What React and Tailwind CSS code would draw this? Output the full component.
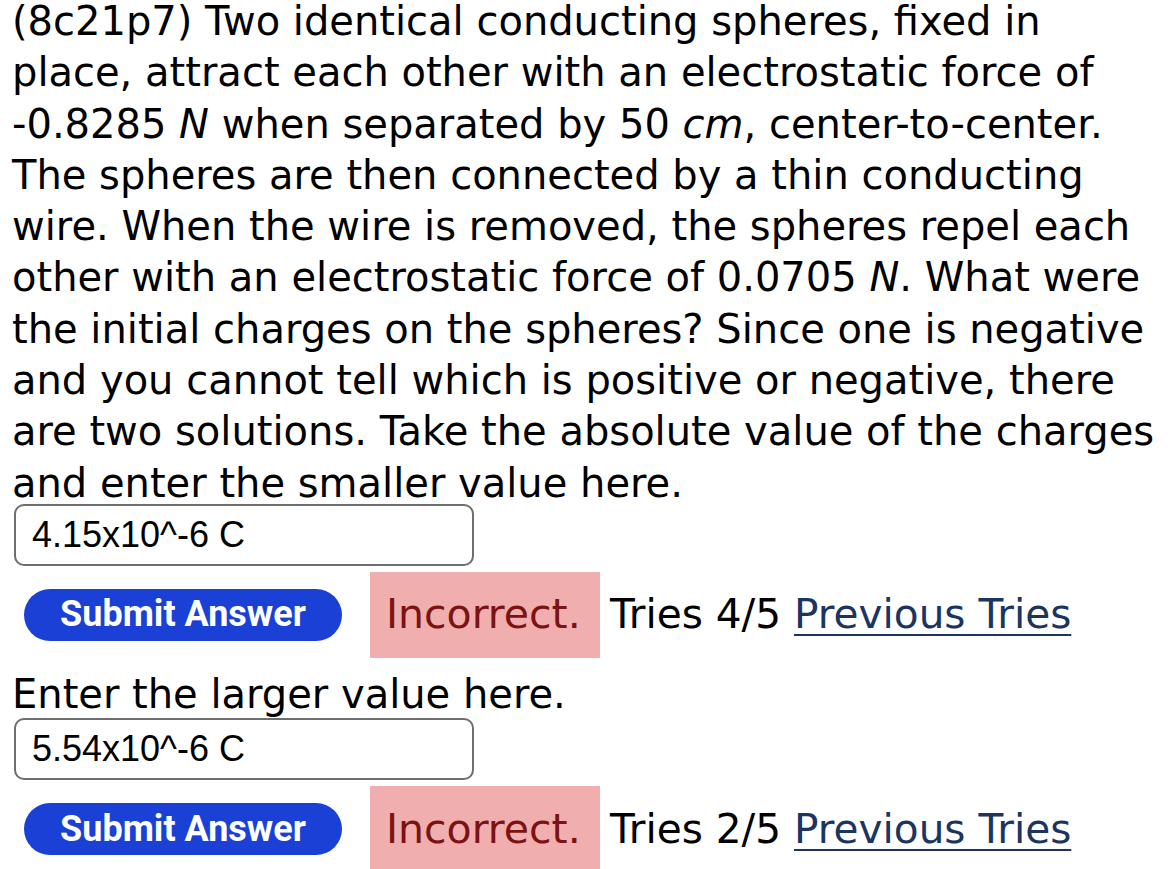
import React from 'react';

const AnswerRow = ({ value, tries, offset }) => (
  <div>
    <div className={`pl-[2px] ${offset}`}>
      <input
        type="text"
        defaultValue={value}
        className="w-[460px] h-[62px] rounded-[10px] border-2 border-[#6e6e6e] bg-white px-[16px] text-[36px] text-black font-['Liberation_Sans',Arial,sans-serif] outline-none"
      />
    </div>
    <div className="flex items-center pl-[12px] mt-[6px]">
      <button
        type="button"
        className="w-[318px] h-[52px] rounded-full bg-[#1a40d6] text-white text-[36px] font-bold font-['Roboto','Liberation_Sans',sans-serif]"
      >
        Submit Answer
      </button>
      <div className="ml-[28px] h-[86px] w-[230px] bg-[#f1aeae] flex items-center pl-[16px] text-[41px] text-[#7c1212]">
        Incorrect.
      </div>
      <div className="ml-[10px] text-[40.6px] text-black">
        Tries {tries}{' '}
        <a href="#" className="text-[#1b3562] underline decoration-2 underline-offset-[6px]">
          Previous Tries
        </a>
      </div>
    </div>
  </div>
);

export default function App() {
  return (
    <div className="min-h-screen bg-white font-['DejaVu_Sans',Verdana,sans-serif] text-black">
      <div className="pl-[12px] pr-[4px] text-[40px] leading-[51.3px]">
        <p className="-mt-[4px]">
          (8c21p7) Two identical conducting spheres, fixed in place, attract each other with an
          electrostatic force of -0.8285 <i>N</i> when separated by 50 <i>cm</i>, center-to-center.
          The spheres are then connected by a thin conducting wire. When the wire is removed, the
          spheres repel each other with an electrostatic force of 0.0705 <i>N</i>. What were the
          initial charges on the spheres? Since one is negative and you cannot tell which is
          positive or negative, there are two solutions. Take the absolute value of the charges and
          enter the smaller value here.
        </p>
        <AnswerRow value="4.15x10^-6 C" tries="4/5" offset="-mt-[5px]" />
        <p className="mt-[11px]">Enter the larger value here.</p>
        <AnswerRow value="5.54x10^-6 C" tries="2/5" offset="-mt-[2px]" />
      </div>
    </div>
  );
}
